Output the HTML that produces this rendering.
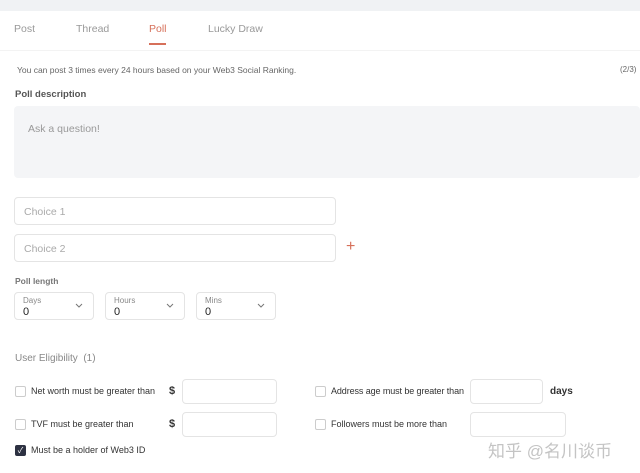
<!DOCTYPE html><html><head><style>
body{margin:0;width:640px;height:473px;background:#fff;font-family:"Liberation Sans","Noto Sans CJK SC",sans-serif;position:relative;overflow:hidden;color:#333}
.a{position:absolute;white-space:nowrap}
.box{position:absolute;border:1px solid #e4e4e4;border-radius:4px;box-sizing:border-box;background:#fff}
.cb{position:absolute;width:11px;height:11px;border:1px solid #ccc;border-radius:2px;box-sizing:border-box}
.lbl{font-size:9px;color:#333}
.sel .t{position:absolute;left:8px;top:3px;font-size:8px;color:#888}
.sel .v{position:absolute;left:8px;top:13px;font-size:11px;color:#222}
.sel svg{position:absolute;right:10px;top:10px}
</style></head><body>
<div class="a" style="left:0;top:0;width:640px;height:11px;background:#f0f2f4"></div>
<div class="a" style="left:14px;top:23px;font-size:10.5px;color:#999">Post</div>
<div class="a" style="left:76px;top:23px;font-size:10.5px;color:#999">Thread</div>
<div class="a" style="left:149px;top:23px;font-size:10.5px;color:#d6705a">Poll</div>
<div class="a" style="left:149px;top:43px;width:17px;height:2px;background:#d6705a"></div>
<div class="a" style="left:208px;top:23px;font-size:10.5px;color:#999">Lucky Draw</div>
<div class="a" style="left:0;top:50px;width:640px;height:1px;background:#f3f3f3"></div>
<div class="a" style="left:17px;top:65px;font-size:8.5px;color:#666">You can post 3 times every 24 hours based on your Web3 Social Ranking.</div>
<div class="a" style="left:620px;top:65px;font-size:8px;color:#666">(2/3)</div>
<div class="a" style="left:15px;top:89px;font-size:9.5px;font-weight:bold;color:#555">Poll description</div>
<div class="a" style="left:14px;top:106px;width:626px;height:72px;background:#f4f5f7;border-radius:4px"></div>
<div class="a" style="left:28px;top:123px;font-size:10.5px;color:#999">Ask a question!</div>
<div class="box" style="left:14px;top:197px;width:322px;height:28px"></div>
<div class="a" style="left:24px;top:206px;font-size:10.5px;color:#aaa">Choice 1</div>
<div class="box" style="left:14px;top:234px;width:322px;height:28px"></div>
<div class="a" style="left:24px;top:243px;font-size:10.5px;color:#aaa">Choice 2</div>
<div class="a" style="left:346px;top:238px;font-size:16px;color:#d6705a">+</div>
<div class="a" style="left:15px;top:276px;font-size:8.5px;font-weight:bold;color:#777">Poll length</div>
<div class="box sel" style="left:14px;top:292px;width:80px;height:28px"><span class="t">Days</span><span class="v">0</span><svg width="8" height="5"><path d="M1 1l3 3 3-3" fill="none" stroke="#777" stroke-width="1"/></svg></div>
<div class="box sel" style="left:105px;top:292px;width:80px;height:28px"><span class="t">Hours</span><span class="v">0</span><svg width="8" height="5"><path d="M1 1l3 3 3-3" fill="none" stroke="#777" stroke-width="1"/></svg></div>
<div class="box sel" style="left:196px;top:292px;width:80px;height:28px"><span class="t">Mins</span><span class="v">0</span><svg width="8" height="5"><path d="M1 1l3 3 3-3" fill="none" stroke="#777" stroke-width="1"/></svg></div>
<div class="a" style="left:15px;top:353px;font-size:10px;color:#888">User Eligibility &nbsp;(1)</div>
<div class="cb" style="left:15px;top:386px"></div>
<div class="a lbl" style="left:31px;top:386px">Net worth must be greater than</div>
<div class="a" style="left:169px;top:385px;font-size:11px;font-weight:bold">$</div>
<div class="box" style="left:182px;top:379px;width:95px;height:25px"></div>
<div class="cb" style="left:15px;top:419px"></div>
<div class="a lbl" style="left:31px;top:419px">TVF must be greater than</div>
<div class="a" style="left:169px;top:418px;font-size:11px;font-weight:bold">$</div>
<div class="box" style="left:182px;top:412px;width:95px;height:25px"></div>
<div class="a" style="left:15px;top:445px;width:11px;height:11px;background:#2d3142;border-radius:2px;color:#fff;font-size:8px;text-align:center;line-height:11px">✓</div>
<div class="a lbl" style="left:31px;top:445px">Must be a holder of Web3 ID</div>
<div class="cb" style="left:315px;top:386px"></div>
<div class="a lbl" style="left:331px;top:386px;letter-spacing:-0.1px">Address age must be greater than</div>
<div class="box" style="left:470px;top:379px;width:73px;height:25px"></div>
<div class="a" style="left:550px;top:386px;font-size:10px;font-weight:bold">days</div>
<div class="cb" style="left:315px;top:419px"></div>
<div class="a lbl" style="left:331px;top:419px">Followers must be more than</div>
<div class="box" style="left:470px;top:412px;width:96px;height:25px"></div>
<div class="a" style="left:488px;top:437px;font-size:17px;color:#c4c4c4">知乎 @名川谈币</div>
</body></html>
